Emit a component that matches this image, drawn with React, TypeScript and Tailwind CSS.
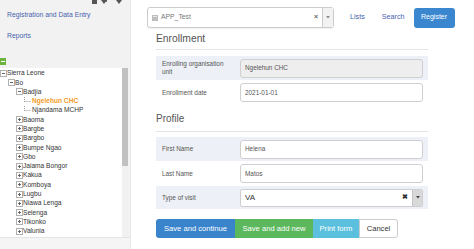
import React from "react";

const font = { fontFamily: '"Liberation Sans", Arial, sans-serif' };

type Node = { label: string; level: number; kind: "open" | "closed" | "leaf"; active?: boolean };

const tree: Node[] = [
  { label: "Sierra Leone", level: 0, kind: "open" },
  { label: "Bo", level: 1, kind: "open" },
  { label: "Badjia", level: 2, kind: "open" },
  { label: "Ngelehun CHC", level: 3, kind: "leaf", active: true },
  { label: "Njandama MCHP", level: 3, kind: "leaf" },
  { label: "Baoma", level: 2, kind: "closed" },
  { label: "Bargbe", level: 2, kind: "closed" },
  { label: "Bargbo", level: 2, kind: "closed" },
  { label: "Bumpe Ngao", level: 2, kind: "closed" },
  { label: "Gbo", level: 2, kind: "closed" },
  { label: "Jaiama Bongor", level: 2, kind: "closed" },
  { label: "Kakua", level: 2, kind: "closed" },
  { label: "Komboya", level: 2, kind: "closed" },
  { label: "Lugbu", level: 2, kind: "closed" },
  { label: "Niawa Lenga", level: 2, kind: "closed" },
  { label: "Selenga", level: 2, kind: "closed" },
  { label: "Tikonko", level: 2, kind: "closed" },
  { label: "Valunia", level: 2, kind: "closed" },
];

function Toggle({ open }: { open: boolean }) {
  return (
    <svg width="7" height="7" viewBox="0 0 7 7" className="shrink-0">
      <rect x="0.5" y="0.5" width="6" height="6" fill="#fff" stroke="#b0b0b0" />
      <line x1="2" y1="3.5" x2="5" y2="3.5" stroke="#666" />
      {!open && <line x1="3.5" y1="2" x2="3.5" y2="5" stroke="#666" />}
    </svg>
  );
}

function Leaf() {
  return (
    <svg width="8" height="9" viewBox="0 0 8 9" className="shrink-0">
      <line x1="0.5" y1="0" x2="0.5" y2="5" stroke="#999" strokeDasharray="1 1" />
      <line x1="0.5" y1="4.5" x2="7" y2="4.5" stroke="#999" strokeDasharray="1 1" />
    </svg>
  );
}

function Row({ label, shaded, children, h }: { label: React.ReactNode; shaded?: boolean; children: React.ReactNode; h: string }) {
  return (
    <div className={`flex items-center ${h} ${shaded ? "bg-[#edf1f7]" : "bg-white"}`}>
      <div className="w-[84px] pl-[6px] text-[6.4px] leading-[8px] text-[#555]">{label}</div>
      <div className="w-[183px]">{children}</div>
    </div>
  );
}

function Input({ value, disabled }: { value: string; disabled?: boolean }) {
  return (
    <div
      className={`h-[19px] rounded-[3px] border border-[#cfcfcf] flex items-center pl-[4px] text-[6.4px] text-[#555] ${
        disabled ? "bg-[#eeeeee]" : "bg-white"
      }`}
    >
      {value}
    </div>
  );
}

export default function App() {
  return (
    <div className="flex w-[474px] h-[249px] overflow-hidden bg-white" style={font}>
      {/* Left panel */}
      <div className="w-[130px] h-full bg-[#f2f2f2] flex flex-col shrink-0">
        <div className="h-[5px] overflow-hidden flex justify-end items-start pr-[8px] gap-[4px]">
          <svg width="5" height="4" viewBox="0 0 5 4">
            <rect x="0" y="0" width="5" height="4" fill="#555" />
          </svg>
          <svg width="6" height="5" viewBox="0 0 6 5">
            <path d="M6 0 L0 0 L3 4 Z" fill="#555" />
            <path d="M1 0 L6 2 L6 0 Z" fill="#555" />
          </svg>
          <svg width="6" height="5" viewBox="0 0 6 5" className="ml-[5px]">
            <path d="M0 0 L6 0 L3 4 Z" fill="#555" />
          </svg>
        </div>
        <div className="pl-[7px] mt-[6px] text-[6.8px] leading-[8px] text-[#4662ad]">Registration and Data Entry</div>
        <div className="pl-[7px] mt-[13px] text-[6.8px] leading-[8px] text-[#4662ad]">Reports</div>
        <div className="mt-[18px] w-[6px] h-[7px] bg-[#6cb33f] flex items-center justify-center">
          <div className="w-[4px] h-[1px] bg-white" />
        </div>
        <div className="mt-[3px] flex h-[169px]">
          <div className="w-[122px] bg-white pt-[0.5px] overflow-hidden">
            {tree.map((n) => (
              <div
                key={n.label}
                className="flex items-center h-[9.3px] text-[6.6px] whitespace-nowrap"
                style={{ paddingLeft: n.kind === "leaf" ? 24 : n.level * 8 }}
              >
                {n.kind === "leaf" ? <Leaf /> : <Toggle open={n.kind === "open"} />}
                <span className={n.active ? "text-[#f39c25] font-bold" : "text-[#333]"}>{n.label}</span>
              </div>
            ))}
          </div>
          <div className="w-[6px] bg-[#f1f1f1] flex flex-col">
            <div className="h-[98px] bg-[#c1c1c1]" />
          </div>
        </div>
        <div className="flex-1 bg-[#f5f5f5] border-t border-[#e4e4e4]" />
      </div>

      {/* Main */}
      <div className="flex-1 h-full bg-white border-l border-[#e8e8e8]">
        <div className="flex items-center mt-[7px] pl-[16px] h-[21px]">
          <div className="w-[187px] h-[21px] border border-[#cccccc] rounded-[3px] flex items-center shadow-[0_1px_1px_rgba(0,0,0,0.06)]">
            <svg width="6" height="6" viewBox="0 0 6 6" className="ml-[4px]">
              <rect x="0" y="0" width="6" height="6" fill="#bdbdbd" />
              <rect x="1" y="1" width="4" height="1" fill="#e8e8e8" />
            </svg>
            <span className="ml-[3px] text-[6.8px] text-[#777]">APP_Test</span>
            <span className="ml-auto text-[7px] text-[#666] font-bold mr-[4px]">×</span>
            <div className="h-full w-[11px] border-l border-[#cccccc] bg-[#f2f2f2] flex items-center justify-center">
              <svg width="4" height="3" viewBox="0 0 4 3">
                <path d="M0 0 L4 0 L2 2.5 Z" fill="#888" />
              </svg>
            </div>
          </div>
          <span className="ml-[16px] text-[7.2px] text-[#4662ad]">Lists</span>
          <span className="ml-[17px] text-[7.2px] text-[#4662ad]">Search</span>
          <div className="ml-[9px] w-[41px] h-[20px] rounded-[3px] bg-[#3a87cf] flex items-center justify-center text-[7px] text-white">
            Register
          </div>
        </div>

        <div className="pl-[25px] w-[297px]">
          <div className="h-[22px] flex items-end pb-[4px] border-b border-[#e5e5e5]">
            <span className="text-[10.3px] leading-[12px] text-[#555]">Enrollment</span>
          </div>
          <div className="mt-[6px]">
            <Row shaded h="h-[24px]" label={<>Enrolling organisation<br />unit</>}>
              <Input value="Ngelehun CHC" disabled />
            </Row>
            <Row h="h-[25px]" label="Enrollment date">
              <Input value="2021-01-01" />
            </Row>
          </div>
          <div className="h-[27px] flex items-end pb-[6px] border-b border-[#e5e5e5]">
            <span className="text-[10px] leading-[12px] text-[#555]">Profile</span>
          </div>
          <div className="mt-[5px]">
            <Row shaded h="h-[24px]" label="First Name">
              <Input value="Helena" />
            </Row>
            <Row h="h-[25px]" label="Last Name">
              <Input value="Matos" />
            </Row>
            <Row shaded h="h-[23px]" label="Type of visit">
              <div className="h-[18px] rounded-[2px] border border-[#cfcfcf] bg-white flex items-center">
                <span className="pl-[4px] text-[8px] text-[#333]">VA</span>
                <span className="ml-auto mr-[4px] text-[7px] font-bold text-[#333]">✖</span>
                <div className="h-full w-[10px] bg-[#d9d9d9] border-l border-[#c4c4c4] flex items-center justify-center">
                  <svg width="4" height="3" viewBox="0 0 4 3">
                    <path d="M0 0 L4 0 L2 2.5 Z" fill="#444" />
                  </svg>
                </div>
              </div>
            </Row>
          </div>
          <div className="mt-[10px] flex h-[19px] text-[7.6px]">
            <div className="w-[79px] bg-[#3a84cc] text-white flex items-center justify-center rounded-l-[3px]">Save and continue</div>
            <div className="w-[78px] bg-[#5cb85c] text-white flex items-center justify-center">Save and add new</div>
            <div className="w-[46px] bg-[#5bc0de] text-white flex items-center justify-center">Print form</div>
            <div className="w-[39px] bg-white border border-[#cccccc] text-[#333] flex items-center justify-center rounded-r-[3px]">Cancel</div>
          </div>
        </div>
      </div>
    </div>
  );
}
